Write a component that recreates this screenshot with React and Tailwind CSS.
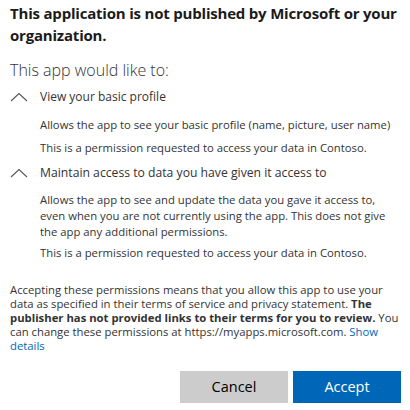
import React from "react";

function Chevron() {
  return (
    <svg width="18" height="10" viewBox="0 0 18 10" className="shrink-0">
      <polyline points="1,9 9,1.5 17,9" fill="none" stroke="#555" strokeWidth="1.1" />
    </svg>
  );
}

export default function App() {
  return (
    <div
      className="w-[410px] h-[410px] bg-white overflow-hidden pl-[10px] pr-[9px] flex flex-col text-[#333]"
      style={{ fontFamily: '"Open Sans", "Noto Sans", sans-serif' }}
    >
      <h1 className="pt-[2px] text-[15px] leading-[22px] font-bold text-[#1b1b1b] tracking-[-0.2px]">
        This application is not published by Microsoft or your organization.
      </h1>
      <div className="mt-[14px] text-[16px] leading-[20px] font-light text-[#333]">
        This app would like to:
      </div>

      <div className="mt-[8px] flex items-center h-[18px]">
        <Chevron />
        <span className="ml-[12px] text-[12px] leading-[18px]">View your basic profile</span>
      </div>
      <div className="ml-[30px] mt-[11px] text-[11.3px] leading-[16px]">
        Allows the app to see your basic profile (name, picture, user name)
      </div>
      <div className="ml-[30px] mt-[7px] text-[11.3px] leading-[16px]">
        This is a permission requested to access your data in Contoso.
      </div>

      <div className="mt-[8px] flex items-center h-[18px]">
        <Chevron />
        <span className="ml-[12px] text-[12.2px] leading-[18px]">
          Maintain access to data you have given it access to
        </span>
      </div>
      <div className="ml-[30px] mt-[10px] text-[11.3px] leading-[16px]">
        Allows the app to see and update the data you gave it access to, even when you are not
        currently using the app. This does not give the app any additional permissions.
      </div>
      <div className="ml-[30px] mt-[5px] text-[11.3px] leading-[16px]">
        This is a permission requested to access your data in Contoso.
      </div>

      <p className="mt-[22px] text-[11.3px] leading-[14px]">
        Accepting these permissions means that you allow this app to use your data as specified in
        their terms of service and privacy statement.{" "}
        <b className="font-bold">
          The publisher has not provided links to their terms for you to review.
        </b>{" "}
        You can change these permissions at https://myapps.microsoft.com.{" "}
        <span className="text-[#0067b8]">Show details</span>
      </p>

      <div className="mt-[18px] flex justify-end gap-[5px]">
        <button className="w-[108px] h-[32px] bg-[#cccccc] text-[#000] text-[14.5px]">Cancel</button>
        <button className="w-[108px] h-[32px] bg-[#0067b8] text-white text-[14.5px]">Accept</button>
      </div>
    </div>
  );
}
